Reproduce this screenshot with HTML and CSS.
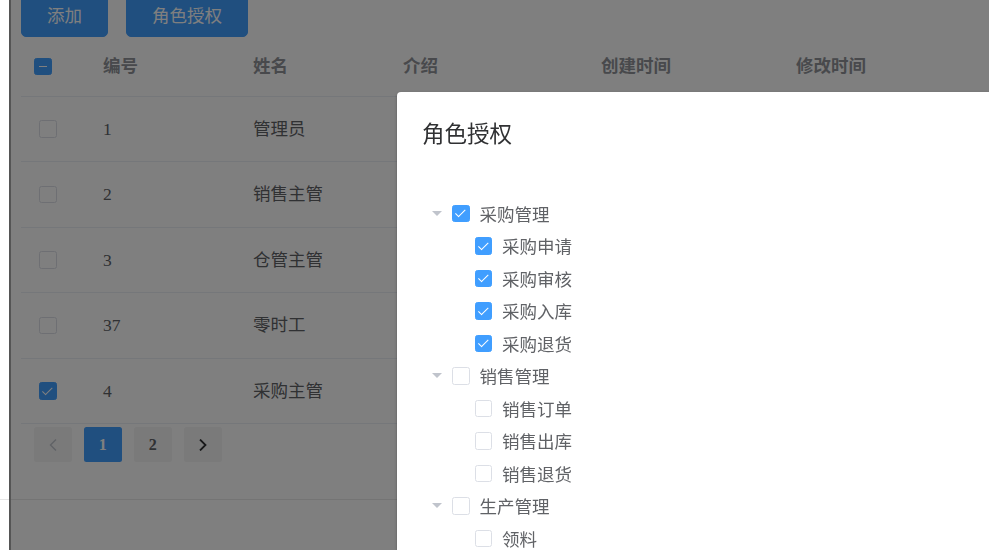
FILE: index.html
```html
<!DOCTYPE html>
<html lang="zh-CN">
<head>
<meta charset="utf-8">
<title>角色管理</title>
<link rel="stylesheet" href="styles.css">
</head>
<body>
<div class="page">
  <aside class="strip">
    <div class="strip-top"></div>
    <div class="strip-bottom"></div>
  </aside>
  <main class="main">
    <div class="content">
      <div class="toolbar">
        <button class="btn">添加</button>
        <button class="btn">角色授权</button>
      </div>
      <div class="table">
        <div class="tr thead">
          <div class="td c-check c-head"><span class="cb indeterminate"></span></div>
          <div class="td">编号</div>
          <div class="td">姓名</div>
          <div class="td">介绍</div>
          <div class="td">创建时间</div>
          <div class="td">修改时间</div>
        </div>
        <div class="tr">
          <div class="td c-check"><span class="cb"></span></div>
          <div class="td">1</div>
          <div class="td">管理员</div>
          <div class="td"></div><div class="td"></div><div class="td"></div>
        </div>
        <div class="tr">
          <div class="td c-check"><span class="cb"></span></div>
          <div class="td">2</div>
          <div class="td">销售主管</div>
          <div class="td"></div><div class="td"></div><div class="td"></div>
        </div>
        <div class="tr">
          <div class="td c-check"><span class="cb"></span></div>
          <div class="td">3</div>
          <div class="td">仓管主管</div>
          <div class="td"></div><div class="td"></div><div class="td"></div>
        </div>
        <div class="tr">
          <div class="td c-check"><span class="cb"></span></div>
          <div class="td">37</div>
          <div class="td">零时工</div>
          <div class="td"></div><div class="td"></div><div class="td"></div>
        </div>
        <div class="tr">
          <div class="td c-check"><span class="cb checked"></span></div>
          <div class="td">4</div>
          <div class="td">采购主管</div>
          <div class="td"></div><div class="td"></div><div class="td"></div>
        </div>
      </div>
      <div class="pager">
        <button class="pg pg-disabled"><svg width="8" height="12" viewBox="0 0 8 12"><polyline points="7,0.5 1.5,6 7,11.5" fill="none" stroke="#c0c4cc" stroke-width="1.4"/></svg></button>
        <button class="pg pg-active">1</button>
        <button class="pg">2</button>
        <button class="pg"><svg width="8" height="12" viewBox="0 0 8 12"><polyline points="1,0.5 6.5,6 1,11.5" fill="none" stroke="#303133" stroke-width="1.8"/></svg></button>
      </div>
    </div>
    <div class="main-footer"></div>
  </main>
</div>

<div class="mask"></div>

<div class="dialog">
  <div class="dialog-header">
    <span class="dialog-title">角色授权</span>
  </div>
  <div class="dialog-body">
    <div class="tree">
      <div class="node"><span class="caret"></span><span class="cb checked"></span><span class="label">采购管理</span></div>
      <div class="node child"><span class="caret leaf"></span><span class="cb checked"></span><span class="label">采购申请</span></div>
      <div class="node child"><span class="caret leaf"></span><span class="cb checked"></span><span class="label">采购审核</span></div>
      <div class="node child"><span class="caret leaf"></span><span class="cb checked"></span><span class="label">采购入库</span></div>
      <div class="node child"><span class="caret leaf"></span><span class="cb checked"></span><span class="label">采购退货</span></div>
      <div class="node"><span class="caret"></span><span class="cb"></span><span class="label">销售管理</span></div>
      <div class="node child"><span class="caret leaf"></span><span class="cb"></span><span class="label">销售订单</span></div>
      <div class="node child"><span class="caret leaf"></span><span class="cb"></span><span class="label">销售出库</span></div>
      <div class="node child"><span class="caret leaf"></span><span class="cb"></span><span class="label">销售退货</span></div>
      <div class="node"><span class="caret"></span><span class="cb"></span><span class="label">生产管理</span></div>
      <div class="node child"><span class="caret leaf"></span><span class="cb"></span><span class="label">领料</span></div>
    </div>
  </div>
</div>
</body>
</html>
```

FILE: styles.css
```css
* { box-sizing: border-box; }

html, body {
  margin: 0;
  padding: 0;
  width: 989px;
  height: 550px;
  overflow: hidden;
  background: #fff;
  font-family: "Liberation Serif", "Noto Sans CJK SC", serif;
}

.page {
  display: flex;
  height: 550px;
  overflow: hidden;
}

.strip {
  width: 9px;
  display: flex;
  flex-direction: column;
}
.strip-top { height: 499px; }
.strip-bottom { flex: 1; border-top: 1px solid #e6e6e6; }

.main {
  flex: 1;
  border-left: 2px solid #aaa;
  display: flex;
  flex-direction: column;
  min-width: 0;
}

.content {
  height: 499px;
  padding: 0 0 0 10px;
  overflow: hidden;
}

.main-footer {
  flex: 1;
  border-top: 1px solid #e8e8e8;
}

.toolbar {
  display: flex;
  gap: 18px;
  margin-top: -8px;
}

.btn {
  height: 45px;
  padding: 0 25px;
  border: 1px solid #409eff;
  background: #409eff;
  color: #fff;
  border-radius: 5px;
  font-family: "Noto Sans CJK SC", sans-serif;
  font-size: 17.5px;
  line-height: 1;
}

.table {
  font-size: 17.5px;
  color: #606266;
}

.tr {
  display: grid;
  grid-template-columns: 70px 150px 150px 198px 195px 1fr;
  height: 65.5px;
  border-bottom: 1px solid #ebeef5;
  align-items: center;
}
.tr.thead {
  height: 59.5px;
  color: #909399;
  font-weight: bold;
}

.td {
  padding-left: 12px;
  line-height: 28px;
  white-space: nowrap;
}
.c-check { padding-left: 18px; display: flex; align-items: center; }
.c-check.c-head { padding-left: 13px; }

/* checkbox */
.cb {
  position: relative;
  display: inline-block;
  width: 17.5px;
  height: 17.5px;
  border: 1px solid #dcdfe6;
  border-radius: 2.5px;
  background: #fff;
  flex: none;
}
.cb.checked, .cb.indeterminate {
  background: #409eff;
  border-color: #409eff;
}
.cb.checked::after {
  content: "";
  position: absolute;
  left: 5.2px;
  top: 1.8px;
  width: 4px;
  height: 8.5px;
  border: 1.3px solid #fff;
  border-left: 0;
  border-top: 0;
  transform: rotate(45deg);
}
.cb.indeterminate::after {
  content: "";
  position: absolute;
  left: 3.5px;
  right: 3.5px;
  top: 7px;
  height: 1.5px;
  background: #fff;
}

.pager {
  display: flex;
  gap: 12.5px;
  margin-top: 3px;
  padding-left: 13px;
}
.pg {
  width: 37.5px;
  height: 35px;
  border: 0;
  border-radius: 2.5px;
  background: #f4f4f5;
  color: #606266;
  font-family: "Liberation Serif", serif;
  font-weight: bold;
  font-size: 16px;
  display: flex;
  align-items: center;
  justify-content: center;
  padding: 0;
}
.pg-active { background: #409eff; color: #fff; }

.mask {
  position: fixed;
  left: 9px;
  top: 0;
  right: 0;
  bottom: 0;
  background: rgba(0, 0, 0, 0.5);
}

.dialog {
  position: absolute;
  left: 397px;
  top: 92px;
  right: 0;
  bottom: 0;
  overflow: hidden;
  background: #fff;
  border-radius: 4px 0 0 0;
  box-shadow: 0 1px 3px rgba(0, 0, 0, 0.3);
  font-family: "Noto Sans CJK SC", sans-serif;
}

.dialog-header {
  padding: 25px 25px 12.5px;
}
.dialog-title {
  display: block;
  font-size: 22.5px;
  line-height: 30px;
  color: #303133;
}

.dialog-body {
  padding: 37.5px 25px 0;
}

.node {
  display: flex;
  align-items: center;
  height: 32.5px;
  font-size: 17.5px;
  color: #606266;
}
.node.child { padding-left: 22.5px; }

.caret {
  width: 30px;
  height: 32.5px;
  display: flex;
  align-items: center;
  justify-content: center;
  flex: none;
}
.caret::before {
  content: "";
  width: 0;
  height: 0;
  border-left: 5px solid transparent;
  border-right: 5px solid transparent;
  border-top: 5.5px solid #c0c4cc;
}
.caret.leaf::before { display: none; }

.node .cb { margin-right: 10px; }
.label { line-height: 1; white-space: nowrap; }
```
